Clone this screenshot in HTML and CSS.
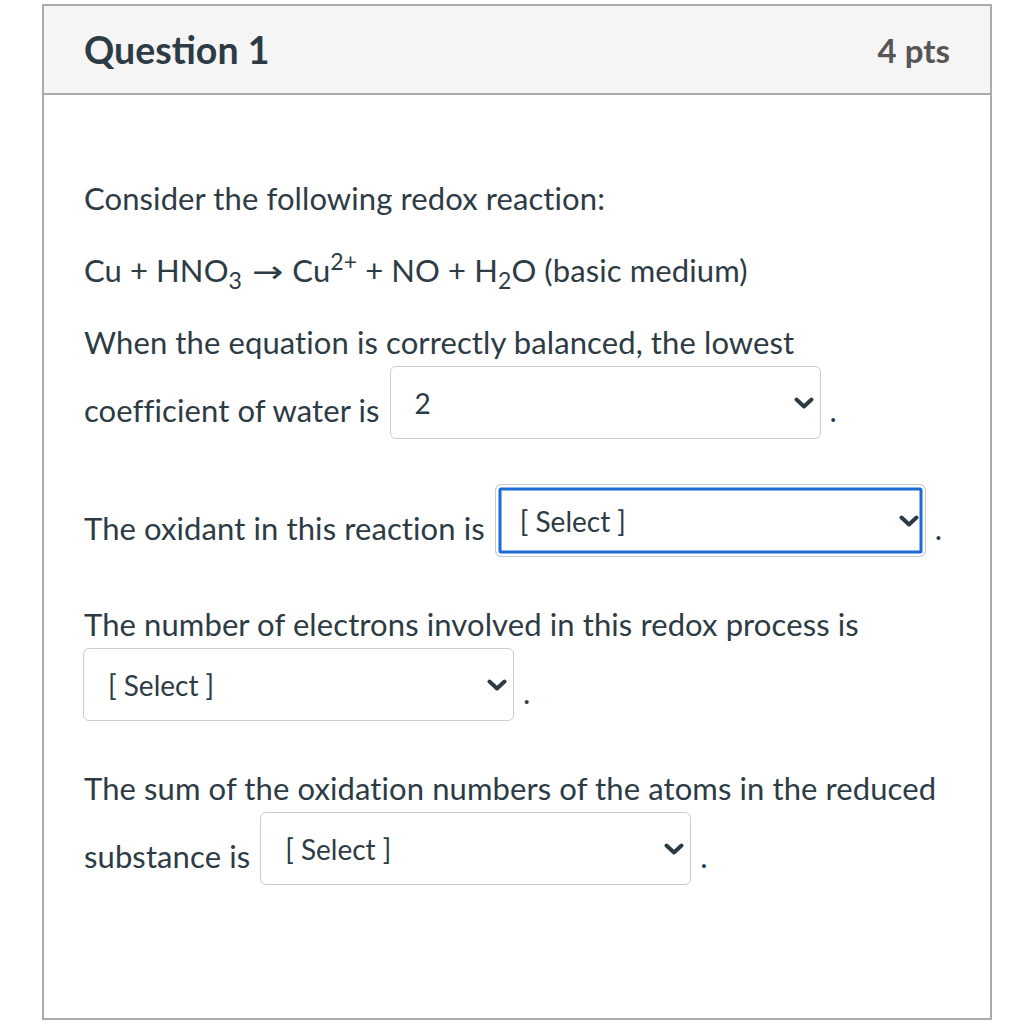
FILE: index.html
```html
<!DOCTYPE html>
<html lang="en">
<head>
<meta charset="utf-8">
<title>Question 1</title>
<link rel="stylesheet" href="styles.css">
</head>
<body>
<div class="card">
  <div class="card-header">
    <span class="q-title">Question 1</span>
    <span class="q-pts">4 pts</span>
  </div>
  <div class="card-body">
    <p class="para">Consider the following redox reaction:</p>
    <p class="para">Cu + HNO<sub>3</sub> <span class="arrow">→</span> Cu<sup>2+</sup> + NO + H<sub>2</sub>O (basic medium)</p>
    <p class="para">When the equation is correctly balanced, the lowest coefficient of water is<span class="blank"><span class="select"><span class="sel-text">2</span><svg class="chev" viewBox="0 0 20 12" width="20" height="12"><polyline points="2.5,2.5 10,9.5 17.5,2.5" /></svg></span>.</span></p>
    <p class="para spaced">The oxidant in this reaction is<span class="blank"><span class="select focused"><span class="sel-text">[ Select ]</span><svg class="chev" viewBox="0 0 20 12" width="20" height="12"><polyline points="2.5,2.5 10,9.5 17.5,2.5" /></svg></span>.</span></p>
    <p class="para spaced">The number of electrons involved in this redox process is <span class="blank"><span class="select nomargin"><span class="sel-text">[ Select ]</span><svg class="chev" viewBox="0 0 20 12" width="20" height="12"><polyline points="2.5,2.5 10,9.5 17.5,2.5" /></svg></span>.</span></p>
    <p class="para spaced">The sum of the oxidation numbers of the atoms in the reduced substance is<span class="blank"><span class="select"><span class="sel-text">[ Select ]</span><svg class="chev" viewBox="0 0 20 12" width="20" height="12"><polyline points="2.5,2.5 10,9.5 17.5,2.5" /></svg></span>.</span></p>
  </div>
</div>
</body>
</html>
```

FILE: styles.css
```css
html, body {
  margin: 0;
  padding: 0;
  background: #ffffff;
}

body {
  font-family: Lato, "Noto Sans", "DejaVu Sans", sans-serif;
  color: #2d3b45;
}

.card {
  box-sizing: border-box;
  width: 950px;
  height: 1016px;
  margin: 4px 0 0 42px;
  border: 2px solid #ababab;
  background: #ffffff;
}

.card-header {
  box-sizing: border-box;
  height: 89px;
  background: #f5f5f5;
  border-bottom: 2px solid #ababab;
  display: flex;
  align-items: center;
  justify-content: space-between;
  padding: 0 40px 0 40px;
}

.q-title {
  font-size: 37.5px;
  font-weight: 700;
  color: #2d3b45;
}

.q-pts {
  font-size: 33px;
  font-weight: 700;
  color: #565656;
}

.card-body {
  padding: 80px 48px 0 40px;
}

.para {
  margin: 0 0 26px 0;
  font-size: 31px;
  letter-spacing: 0.1px;
  line-height: 46px;
}

.para.spaced {
  margin-top: 44px;
}

sub, sup {
  font-size: 23px;
  line-height: 0;
  position: relative;
  vertical-align: baseline;
}

sub {
  top: 7px;
}

sup {
  top: -12px;
}

.arrow {
  display: inline-block;
  font-family: "DejaVu Sans", sans-serif;
  font-size: 30px;
  line-height: 0;
  margin: 0 4px 0 5px;
  transform: scaleX(1.25);
}

.blank {
  white-space: nowrap;
  margin-right: -14px;
}

.select {
  box-sizing: border-box;
  display: inline-flex;
  align-items: center;
  justify-content: space-between;
  width: 431px;
  height: 73px;
  margin: 1px 9px 0 10px;
  padding: 0 6px 0 24px;
  border: 1.5px solid #c9cdd1;
  border-radius: 6px;
  background: #ffffff;
  vertical-align: 8px;
  letter-spacing: 0;
  white-space: normal;
}

.select.nomargin {
  margin-left: -1px;
}

.select.focused {
  box-shadow: inset 0 0 0 2.5px #ffffff, inset 0 0 0 5.5px #1c6bd4;
}

.sel-text {
  font-size: 28px;
  line-height: normal;
  color: #2d3b45;
}

.chev {
  display: block;
  flex: none;
}

.chev polyline {
  fill: none;
  stroke: #2d3b45;
  stroke-width: 4;
  stroke-linecap: round;
  stroke-linejoin: round;
}
```
